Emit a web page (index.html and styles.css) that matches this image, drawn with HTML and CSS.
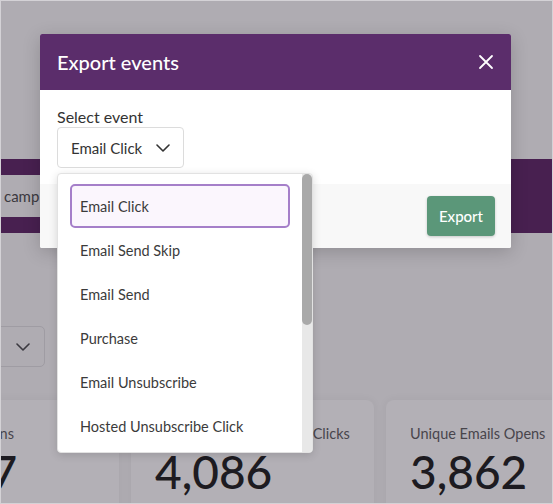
FILE: index.html
```html
<!DOCTYPE html>
<html lang="en">
<head>
  <meta charset="UTF-8" />
  <meta name="viewport" content="width=device-width, initial-scale=1" />
  <title>Export events</title>
  <link rel="stylesheet" href="styles.css">
</head>
<body>

<div class="page">
  <div class="band">
    <div class="search">camp</div>
  </div>

  <div class="filters">
    <div class="filter-select">
      <svg class="chevron" viewBox="0 0 14 8" width="14" height="8"><path d="M1 1l6 6 6-6" /></svg>
    </div>
  </div>

  <div class="stats">
    <div class="stat-card">
      <div class="stat-label">Total Email Opens</div>
      <div class="stat-value">5,247</div>
    </div>
    <div class="stat-card">
      <div class="stat-label">Unique Emails Recorded Clicks</div>
      <div class="stat-value">4,086</div>
    </div>
    <div class="stat-card">
      <div class="stat-label">Unique Emails Opens</div>
      <div class="stat-value">3,862</div>
    </div>
  </div>

  <!-- modal -->
  <div class="modal">
    <div class="modal-header">
      <h2>Export events</h2>
      <button type="button" class="close-btn" title="Close">
        <svg viewBox="0 0 16 16" width="16" height="16"><path d="M2 2l12 12M14 2L2 14" /></svg>
      </button>
    </div>
    <div class="modal-body">
      <label class="field-label">Select event</label>
      <div class="select">
        <span>Email Click</span>
        <svg class="chevron" viewBox="0 0 14 8" width="14" height="8"><path d="M1 1l6 6 6-6" /></svg>
      </div>
    </div>
    <div class="modal-footer">
      <button type="button" class="btn-export">Export</button>
    </div>
  </div>

  <div class="event-menu">
    <ul class="event-list">
      <li class="selected">Email Click</li>
      <li>Email Send Skip</li>
      <li>Email Send</li>
      <li>Purchase</li>
      <li>Email Unsubscribe</li>
      <li>Hosted Unsubscribe Click</li>
      <li>Email Open</li>
      <li>Email Bounce</li>
      <li>Email Spam Report</li>
      <li>Email Delivery</li>
      <li>SMS Send</li>
    </ul>
    <div class="scrollbar"><div class="scroll-thumb"></div></div>
  </div>
</div>

</body>
</html>
```

FILE: styles.css
```css
body {
  margin: 0;
  font-family: Lato, 'Noto Sans', sans-serif;
  color: #333;
  overflow: hidden;
}
.page {
  position: relative;
  width: 553px;
  height: 504px;
  box-sizing: border-box;
  border: 1px solid #d4d2d6;
  background-color: #afacb2;
  padding-top: 158px;
  overflow: hidden;
}

/* page behind the modal (dimmed) */
.band {
  background-color: #482050;
  padding: 16px 0;
}
.search {
  width: 300px;
  height: 42px;
  box-sizing: border-box;
  background-color: #afacb2;
  padding-left: 3px;
  font-size: 15px;
  line-height: 42px;
  color: #3b3940;
}
.filters {
  padding-top: 93px;
}
.filter-select {
  width: 160px;
  height: 41px;
  margin-left: -116px;
  box-sizing: border-box;
  border: 1px solid #9f9ca3;
  border-radius: 5px;
  display: flex;
  align-items: center;
  justify-content: flex-end;
  padding-right: 14px;
}
.filter-select .chevron path {
  stroke: #3b3940;
}
.stats {
  display: flex;
  gap: 12px;
  margin-top: 33px;
  margin-left: -125px;
}
.stat-card {
  flex: 0 0 243px;
  height: 140px;
  box-sizing: border-box;
  padding: 24px 24px 0;
  background-color: #b3b0b6;
  border-radius: 8px;
  box-shadow: 0 0 10px rgba(0, 0, 0, 0.05);
}
.stat-label {
  font-size: 14.5px;
  line-height: 20px;
  color: #48454c;
  white-space: nowrap;
}
.stat-value {
  font-size: 46px;
  line-height: 56px;
  font-weight: 500;
  color: #1d1b21;
}

.chevron path {
  fill: none;
  stroke: #333;
  stroke-width: 1.6;
  stroke-linecap: round;
  stroke-linejoin: round;
}

/* modal */
.modal {
  position: absolute;
  left: 39px;
  top: 33px;
  width: 471px;
  background-color: #fff;
  border-radius: 2px;
  box-shadow: 0 4px 18px rgba(0, 0, 0, 0.18);
  overflow: hidden;
}
.modal-header {
  height: 56px;
  background-color: #5b2d6b;
  display: flex;
  align-items: center;
  justify-content: space-between;
  padding: 0 17px;
}
.modal-header h2 {
  margin: 0;
  font-size: 20px;
  font-weight: 500;
  color: #fff;
}
.close-btn {
  background: none;
  border: none;
  padding: 0;
  width: 16px;
  height: 16px;
  cursor: pointer;
}
.close-btn svg {
  display: block;
}
.close-btn path {
  stroke: #fff;
  stroke-width: 1.8;
  stroke-linecap: round;
}
.modal-body {
  padding: 17px 17px 16px;
}
.field-label {
  display: block;
  font-size: 16px;
  line-height: 20px;
  color: #333;
}
.select {
  width: 127px;
  height: 41px;
  box-sizing: border-box;
  border: 1px solid #dcdcdc;
  border-radius: 4px;
  display: flex;
  align-items: center;
  justify-content: space-between;
  padding: 0 13px;
  font-size: 15px;
  color: #333;
}
.modal-footer {
  height: 64px;
  background-color: #f8f8f8;
  display: flex;
  align-items: center;
  justify-content: flex-end;
  padding-right: 16px;
}
.btn-export {
  width: 68px;
  height: 40px;
  background-color: #5b9779;
  color: #fff;
  border: none;
  border-radius: 4px;
  font-family: inherit;
  font-size: 15px;
  font-weight: 500;
  box-shadow: 0 1px 3px rgba(0, 0, 0, 0.2);
  cursor: pointer;
}

/* dropdown list */
.event-menu {
  position: absolute;
  left: 56px;
  top: 172px;
  width: 256px;
  height: 280px;
  box-sizing: border-box;
  display: flex;
  background-color: #fff;
  border: 1px solid #e2e2e2;
  border-radius: 4px;
  box-shadow: 0 2px 8px rgba(0, 0, 0, 0.14);
  overflow: hidden;
}
.event-list {
  flex: 1;
  margin: 0;
  padding: 10px 0;
  list-style: none;
  overflow: hidden;
}
.event-list li {
  height: 44px;
  box-sizing: border-box;
  margin: 0 12px;
  padding-left: 8px;
  border: 2px solid transparent;
  border-radius: 5px;
  display: flex;
  align-items: center;
  font-size: 14.5px;
  color: #3b3b3b;
  white-space: nowrap;
  cursor: pointer;
}
.event-list li.selected {
  border-color: #a57fc9;
  background-color: #fbf6fd;
}
.scrollbar {
  flex: 0 0 10px;
  background-color: #e8e8e8;
}
.scroll-thumb {
  height: 151px;
  background-color: #a9a9a9;
  border-radius: 5px;
}
```
